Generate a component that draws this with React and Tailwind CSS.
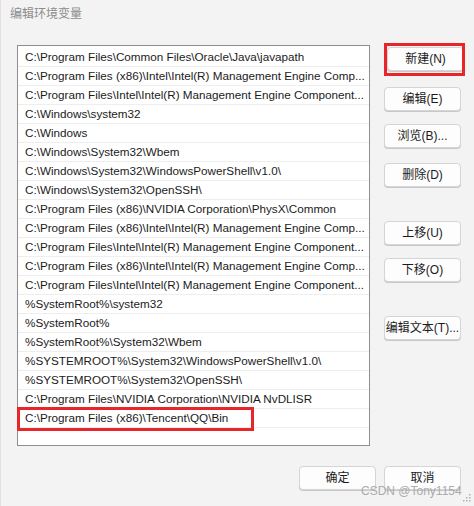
import React from 'react';

const paths = [
  'C:\\Program Files\\Common Files\\Oracle\\Java\\javapath',
  'C:\\Program Files (x86)\\Intel\\Intel(R) Management Engine Comp...',
  'C:\\Program Files\\Intel\\Intel(R) Management Engine Component...',
  'C:\\Windows\\system32',
  'C:\\Windows',
  'C:\\Windows\\System32\\Wbem',
  'C:\\Windows\\System32\\WindowsPowerShell\\v1.0\\',
  'C:\\Windows\\System32\\OpenSSH\\',
  'C:\\Program Files (x86)\\NVIDIA Corporation\\PhysX\\Common',
  'C:\\Program Files (x86)\\Intel\\Intel(R) Management Engine Comp...',
  'C:\\Program Files\\Intel\\Intel(R) Management Engine Component...',
  'C:\\Program Files (x86)\\Intel\\Intel(R) Management Engine Comp...',
  'C:\\Program Files\\Intel\\Intel(R) Management Engine Component...',
  '%SystemRoot%\\system32',
  '%SystemRoot%',
  '%SystemRoot%\\System32\\Wbem',
  '%SYSTEMROOT%\\System32\\WindowsPowerShell\\v1.0\\',
  '%SYSTEMROOT%\\System32\\OpenSSH\\',
  'C:\\Program Files\\NVIDIA Corporation\\NVIDIA NvDLISR',
  'C:\\Program Files (x86)\\Tencent\\QQ\\Bin',
];

const font = { fontFamily: '"Liberation Sans", "Noto Sans CJK SC", sans-serif' };

const Btn = ({ children, className = '' }) => (
  <div
    className={`h-[24px] w-[77px] flex items-center justify-center rounded-[4px] border border-[#d5d5d5] bg-[#fdfdfd] text-[12px] text-[#1b1b1b] shadow-[0_1px_0_#c8c8c8] ${className}`}
  >
    {children}
  </div>
);

export default function App() {
  return (
    <div
      className="relative w-[474px] h-[506px] overflow-hidden bg-[#f3f3f3] border-l border-[#e2e2e2]"
      style={font}
    >
      {/* title */}
      <div className="h-[45px] pl-[9px] pt-[5px] text-[12px] text-[#8c8c8c]">编辑环境变量</div>

      <div className="flex">
        {/* list */}
        <div className="ml-[16px] w-[353px] h-[401px] border border-[#8e8e8e] bg-white pt-[2px] overflow-hidden">
          {paths.map((p, i) => (
            <div
              key={i}
              className="h-[19px] pl-[7px] flex items-center border-b border-[#eeeeee] text-[11.7px] text-[#1b1b1b] whitespace-nowrap"
            >
              {p}
            </div>
          ))}
        </div>

        {/* side buttons */}
        <div className="ml-[14px] pt-[2px] flex flex-col">
          <Btn className="ml-[3px]">新建(N)</Btn>
          <Btn className="mt-[16px]">编辑(E)</Btn>
          <Btn className="mt-[13px]">浏览(B)...</Btn>
          <Btn className="mt-[15px]">删除(D)</Btn>
          <Btn className="mt-[34px]">上移(U)</Btn>
          <Btn className="mt-[13px]">下移(O)</Btn>
          <Btn className="mt-[34px]">编辑文本(T)...</Btn>
        </div>
      </div>

      {/* bottom buttons */}
      <div className="flex justify-end gap-[8px] pr-[13px] mt-[20px]">
        <Btn>确定</Btn>
        <Btn>取消</Btn>
      </div>

      {/* red annotations */}
      <div className="absolute left-[383px] top-[43px] w-[81px] h-[33px] border-[3px] border-[#e8262a]" />
      <div className="absolute left-[16px] top-[407px] w-[237px] h-[24px] border-[3px] border-[#e8262a]" />

      {/* watermark */}
      <div className="absolute left-[360px] top-[482px] text-[12px] text-[#a5a5a5] opacity-90">
        CSDN @Tony1154
      </div>

      {/* resize grip */}
      <svg className="absolute right-[2px] bottom-[3px]" width="10" height="10" viewBox="0 0 10 10">
        <rect x="7" y="1" width="1.5" height="1.5" fill="#b0b0b0" />
        <rect x="4" y="4" width="1.5" height="1.5" fill="#b0b0b0" />
        <rect x="7" y="4" width="1.5" height="1.5" fill="#b0b0b0" />
        <rect x="1" y="7" width="1.5" height="1.5" fill="#b0b0b0" />
        <rect x="4" y="7" width="1.5" height="1.5" fill="#b0b0b0" />
        <rect x="7" y="7" width="1.5" height="1.5" fill="#b0b0b0" />
      </svg>
    </div>
  );
}
